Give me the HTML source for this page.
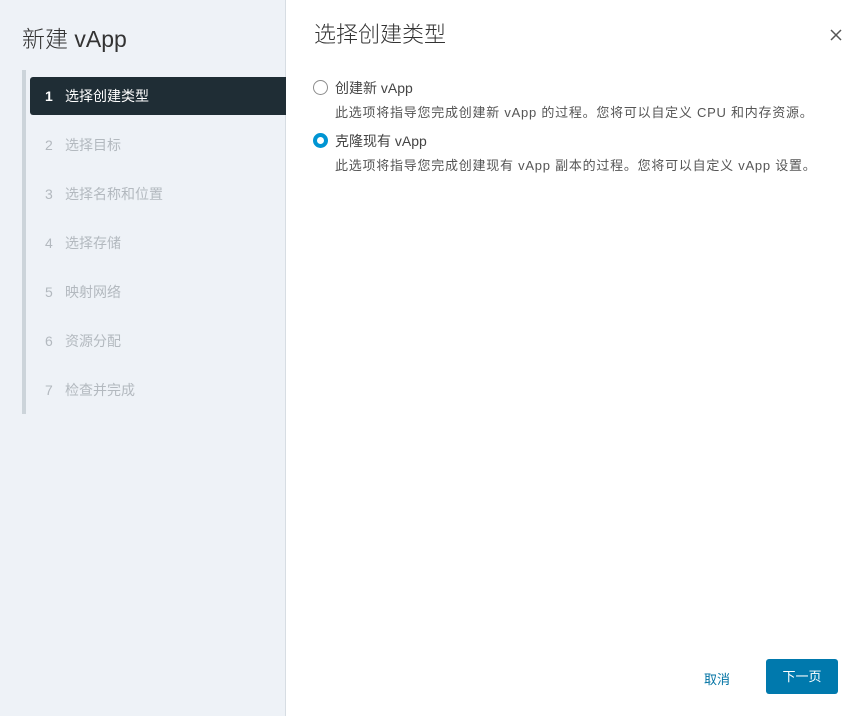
<!DOCTYPE html>
<html><head><meta charset="utf-8"><style>
*{margin:0;padding:0;box-sizing:border-box}
body{width:861px;height:716px;position:relative;overflow:hidden;font-family:"Liberation Sans","Noto Sans CJK SC",sans-serif;background:#fff;color:#333}
.left{position:absolute;left:0;top:0;width:286px;height:716px;background:#eef2f7;border-right:1px solid #d7dde3}
.t{position:absolute;left:22px;top:20px;font-size:23px;color:#333;font-weight:300}
.bar{position:absolute;left:22px;top:70px;width:4px;height:344px;background:#ccd4da}
.it{position:absolute;left:30px;width:256px;height:38px;line-height:38px;font-size:14px;color:#b3b9bf}
.it b{font-weight:normal;display:inline-block;width:35px;padding-left:15px}
.act{background:#1f2d35;color:#fff;border-radius:3px 0 0 3px}
.act b{font-weight:bold}
.h{position:absolute;left:314px;top:17px;font-size:22px;color:#333;font-weight:300}
.x{position:absolute;left:830px;top:29px}
.r{position:absolute;left:313px;width:15px;height:15px;border-radius:50%;border:1px solid #8c8c8c;background:#fff}
.r.on{border:4px solid #0095d3;background:#fff}
.l{position:absolute;left:335px;font-size:14px;color:#444}
.d{position:absolute;left:335px;font-size:13px;letter-spacing:0.75px;color:#555}
.c{position:absolute;left:704px;top:669px;font-size:13px;color:#0072a3}
.btn{position:absolute;left:766px;top:659px;width:72px;height:35px;background:#0079ad;color:#fff;border-radius:3px;font-size:13px;text-align:center;line-height:35px}
</style></head><body>
<div class="left">
<div class="t">新建 vApp</div>
<div class="bar"></div>
<div class="it act" style="top:77px"><b>1</b>选择创建类型</div>
<div class="it" style="top:126px"><b>2</b>选择目标</div>
<div class="it" style="top:175px"><b>3</b>选择名称和位置</div>
<div class="it" style="top:224px"><b>4</b>选择存储</div>
<div class="it" style="top:273px"><b>5</b>映射网络</div>
<div class="it" style="top:322px"><b>6</b>资源分配</div>
<div class="it" style="top:371px"><b>7</b>检查并完成</div>
</div>
<div class="h">选择创建类型</div>
<svg class="x" width="12" height="12" viewBox="0 0 12 12"><path d="M1 1L11 11M11 1L1 11" stroke="#555" stroke-width="1.5"/></svg>
<div class="r" style="top:80px"></div>
<div class="l" style="top:78px">创建新 vApp</div>
<div class="d" style="top:102px">此选项将指导您完成创建新 vApp 的过程。您将可以自定义 CPU 和内存资源。</div>
<div class="r on" style="top:133px"></div>
<div class="l" style="top:131px">克隆现有 vApp</div>
<div class="d" style="top:155px">此选项将指导您完成创建现有 vApp 副本的过程。您将可以自定义 vApp 设置。</div>
<div class="c">取消</div>
<div class="btn">下一页</div>
</body></html>
